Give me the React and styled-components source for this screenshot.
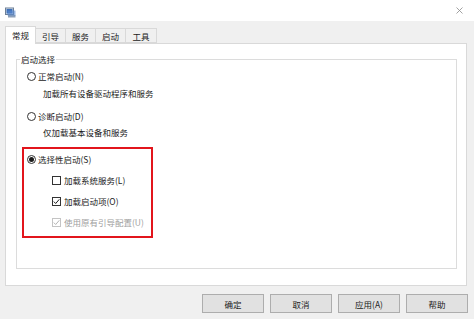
import React, { useState } from 'react';
import styled, { createGlobalStyle } from 'styled-components';

const Global = createGlobalStyle`
  html, body { margin: 0; padding: 0; background: #f0f0f0; }
  body {
    font-family: "Noto Sans CJK SC", "Noto Sans", "Liberation Sans", sans-serif;
    color: #1b1b1b;
  }
`;

const Window = styled.div`
  width: 474px;
  height: 319px;
  background: #f0f0f0;
  display: flex;
  flex-direction: column;
  overflow: hidden;
`;

const TitleBar = styled.div`
  height: 21px;
  background: #fff;
  display: flex;
  align-items: center;
  justify-content: space-between;
  padding: 0 11px 0 5px;
  svg:first-child { margin-top: 4px; }
`;

const TabStrip = styled.div`
  height: 22px;
  display: flex;
  align-items: flex-end;
  padding-left: 5px;
`;

const Tab = styled.div`
  position: relative;
  width: ${p => p.$w}px;
  box-sizing: border-box;
  height: ${p => (p.$active ? 18 : 15)}px;
  margin-bottom: ${p => (p.$active ? -1 : 0)}px;
  margin-left: ${p => (p.$first ? 0 : -1)}px;
  background: ${p => (p.$active ? '#fff' : '#f0f0f0')};
  border: 1px solid #d9d9d9;
  border-bottom: ${p => (p.$active ? 'none' : '1px solid #d9d9d9')};
  z-index: ${p => (p.$active ? 2 : 1)};
  display: flex;
  align-items: center;
  justify-content: center;
  font-size: 8.5px;
  padding-bottom: ${p => (p.$active ? 2 : 0)}px;
  cursor: default;
`;

const Panel = styled.div`
  margin: 0 7px 0 5px;
  height: 243px;
  box-sizing: border-box;
  background: #fff;
  border: 1px solid #d9d9d9;
  padding: 9px 9px 0 10px;
`;

const GroupBox = styled.fieldset`
  margin: 0;
  padding: 4px 0 0 0;
  height: 216px;
  box-sizing: border-box;
  border: 1px solid #dcdcdc;
  display: flex;
  flex-direction: column;
  min-width: 0;
`;

const Legend = styled.legend`
  font-size: 8.5px;
  line-height: 12px;
  padding: 0 1px;
  margin-left: 3px;
  color: #1b1b1b;
`;

const Row = styled.label`
  display: flex;
  align-items: center;
  height: 14px;
  margin-top: ${p => p.$mt || 0}px;
  margin-left: ${p => p.$ml || 0}px;
  font-size: 8.5px;
  color: ${p => (p.$disabled ? '#a0a0a0' : '#1b1b1b')};
  white-space: nowrap;
  cursor: default;
`;

const Desc = styled.div`
  height: 14px;
  display: flex;
  align-items: center;
  margin-top: ${p => p.$mt || 0}px;
  margin-left: 26px;
  font-size: 8.5px;
  white-space: nowrap;
`;

const RadioDot = styled.span`
  width: 9px;
  height: 9px;
  box-sizing: border-box;
  border-radius: 50%;
  border: 1px solid #333;
  background: #fff;
  margin-right: 2px;
  display: flex;
  align-items: center;
  justify-content: center;
  flex-shrink: 0;
  &::after {
    content: '';
    width: 5px;
    height: 5px;
    border-radius: 50%;
    background: #1b1b1b;
    display: ${p => (p.$on ? 'block' : 'none')};
  }
`;

const Box = styled.span`
  width: 9px;
  height: 9px;
  box-sizing: border-box;
  border: 1px solid ${p => (p.$disabled ? '#c4c4c4' : '#333')};
  background: #fff;
  margin-right: 3px;
  display: flex;
  align-items: center;
  justify-content: center;
  flex-shrink: 0;
`;

const Highlight = styled.div`
  margin: 8px 0 0 5px;
  width: 131px;
  height: 91px;
  box-sizing: border-box;
  border: 2px solid #e2151c;
  padding: 3px 0 0 3px;
  display: flex;
  flex-direction: column;
`;

const Footer = styled.div`
  display: flex;
  justify-content: flex-end;
  gap: 6px;
  padding: 8px 6px 0 0;
`;

const Button = styled.button`
  width: 62px;
  height: 19px;
  box-sizing: border-box;
  background: #e1e1e1;
  border: 1px solid #adadad;
  font-family: inherit;
  font-size: 8.5px;
  color: #1b1b1b;
  padding: 0;
`;

const Check = ({ color }) => (
  <svg width="7" height="7" viewBox="0 0 7 7">
    <path d="M0.8 3.6 L2.7 5.5 L6.3 1.3" fill="none" stroke={color} strokeWidth="1" />
  </svg>
);

const AppIcon = () => (
  <svg width="11" height="11" viewBox="0 0 11 11">
    <rect x="0.5" y="1" width="8" height="6.5" fill="#dfe8f2" stroke="#6d7f96" strokeWidth="1" />
    <rect x="1.5" y="2" width="6" height="4.5" fill="#3d6fb8" />
    <rect x="3" y="8" width="7.5" height="2.5" fill="#8da0b8" />
    <rect x="2.5" y="3.5" width="8" height="5" fill="#5c8ad0" opacity="0.6" />
  </svg>
);

const CloseIcon = () => (
  <svg width="7" height="7" viewBox="0 0 7 7">
    <path d="M0.5 0.5 L6.5 6.5 M6.5 0.5 L0.5 6.5" stroke="#8a8a8a" strokeWidth="0.8" />
  </svg>
);

const tabs = [
  { name: '常规', w: 31 },
  { name: '引导', w: 31 },
  { name: '服务', w: 31 },
  { name: '启动', w: 31 },
  { name: '工具', w: 32 },
];

const App = () => {
  const [tab, setTab] = useState(0);
  const [mode] = useState(2);

  return (
    <Window>
      <Global />
      <TitleBar>
        <AppIcon />
        <CloseIcon />
      </TitleBar>

      <TabStrip>
        {tabs.map((t, i) => (
          <Tab key={t.name} $w={t.w} $first={i === 0} $active={i === tab} onClick={() => setTab(i)}>
            {t.name}
          </Tab>
        ))}
      </TabStrip>

      <Panel>
        <GroupBox>
          <Legend>启动选择</Legend>

          <Row $ml={10}>
            <RadioDot $on={mode === 0} />正常启动(N)
          </Row>
          <Desc $mt={3}>加载所有设备驱动程序和服务</Desc>

          <Row $ml={10} $mt={9}>
            <RadioDot $on={mode === 1} />诊断启动(D)
          </Row>
          <Desc $mt={2}>仅加载基本设备和服务</Desc>

          <Highlight>
            <Row>
              <RadioDot $on={mode === 2} />选择性启动(S)
            </Row>
            <Row $ml={25} $mt={7}>
              <Box />加载系统服务(L)
            </Row>
            <Row $ml={25} $mt={7}>
              <Box><Check color="#1b1b1b" /></Box>加载启动项(O)
            </Row>
            <Row $ml={25} $mt={7} $disabled>
              <Box $disabled><Check color="#b4b4b4" /></Box>使用原有引导配置(U)
            </Row>
          </Highlight>
        </GroupBox>
      </Panel>

      <Footer>
        <Button>确定</Button>
        <Button>取消</Button>
        <Button>应用(A)</Button>
        <Button>帮助</Button>
      </Footer>
    </Window>
  );
};

export default App;
